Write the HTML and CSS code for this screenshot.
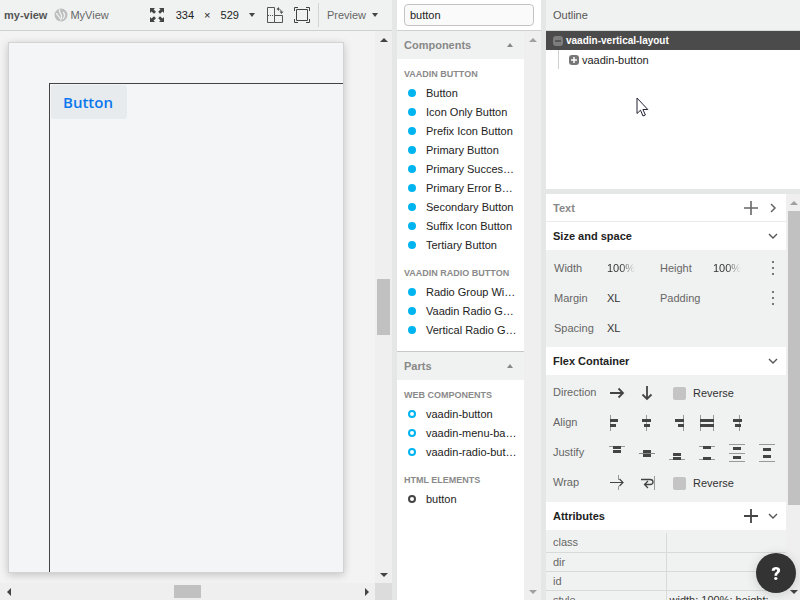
FILE: index.html
```
<!DOCTYPE html>
<html lang="en">
<head>
  <meta charset="UTF-8">
  <meta name="viewport" content="width=device-width, initial-scale=1.0">
  <title>my-view - Designer</title>
  <link rel="stylesheet" href="styles.css">
</head>
<body>
<div class="designer">

  <!-- Canvas -->
  <main class="canvas">
    <header class="toolbar">
      <span class="view-tag">my-view</span>
      <svg class="view-logo" width="14" height="14" viewBox="0 0 14 14"><circle cx="7" cy="7" r="6.5" fill="#bcbebd"/><path d="M6 1.500C4 4 7 5.500 7.500 7.500S7 11 6.500 12.500M2.500 5c0 2.500 3 3 3.500 5.500M9 4c2 2 2.500 4 0 7" fill="none" stroke="#f0f2f1" stroke-width="1.300"/></svg>
      <span class="view-class">MyView</span>
      <button class="icon-button fit" type="button" aria-label="Fit to screen">
        <svg width="14" height="14" viewBox="0 0 14 14"><path d="M0 0h5L3.600 1.400 6 3.800 4 5.700 1.500 3.400 0 5zM14 0v5l-1.500-1.600L10 5.700 8.200 3.800l2.300-2.400L9 0zM0 14V9l1.500 1.600L4 8.300l2 1.900-2.400 2.400L5 14zM14 14H9l1.500-1.400-2.300-2.400L10 8.300l2.500 2.300L14 9z" fill="#444"/></svg>
      </button>
      <button class="size" type="button"><span>334</span><span class="times">×</span><span>529</span><span class="caret-down"></span></button>
      <button class="icon-button" type="button" aria-label="Rotate">
        <svg width="17" height="17" viewBox="0 0 17 17" fill="none" stroke="#555"><path d="M.5.500h7v15h-7zM7.500 8.500h8v7h-8"/><path d="M1 8.500h6" stroke-dasharray="1 1"/><path d="M11 2c2.500 0 3.500 1.500 3.500 4"/><path d="M12 0v4L9.500 2zM12.500 4.500h4l-2 2.500z" fill="#555" stroke="none"/></svg>
      </button>
      <button class="icon-button frame" type="button" aria-label="Toggle frame">
        <svg width="17" height="17" viewBox="0 0 17 17" fill="none" stroke="#444"><path d="M2.500 2.500h11v11h-11z"/><path d="M.5 4V.500H4M12 .500h3.500V4M15.500 12v3.500H12M4 15.500H.5V12"/></svg>
      </button>
      <button class="preview" type="button">Preview<span class="caret-down"></span></button>
    </header>
    <div class="viewport">
      <div class="stage">
        <div class="page">
          <div class="vertical-layout">
            <button class="demo-button" type="button">Button</button>
          </div>
        </div>
      </div>
      <div class="scrollbar vertical dark">
        <span class="arrow up"></span>
        <div class="track center"><div class="thumb stage-y"></div></div>
        <span class="arrow down"></span>
      </div>
      <div class="scrollbar horizontal dark">
        <span class="arrow left"></span>
        <div class="track center"><div class="thumb stage-x"></div></div>
        <span class="arrow right"></span>
      </div>
      <div class="corner"></div>
    </div>
  </main>

  <!-- Palette -->
  <section class="palette">
    <div class="search">
      <input type="text" value="button" aria-label="Search components">
    </div>
    <div class="scroll-area">
      <div class="palette-list">
        <h2 class="palette-head">Components<span class="caret-up"></span></h2>
        <div class="palette-body">
          <h3>VAADIN BUTTON</h3>
          <ul>
            <li>Button</li>
            <li>Icon Only Button</li>
            <li>Prefix Icon Button</li>
            <li>Primary Button</li>
            <li>Primary Succes…</li>
            <li>Primary Error B…</li>
            <li>Secondary Button</li>
            <li>Suffix Icon Button</li>
            <li>Tertiary Button</li>
          </ul>
          <h3>VAADIN RADIO BUTTON</h3>
          <ul>
            <li>Radio Group Wi…</li>
            <li>Vaadin Radio G…</li>
            <li>Vertical Radio G…</li>
          </ul>
        </div>
        <h2 class="palette-head parts">Parts<span class="caret-up"></span></h2>
        <div class="palette-body">
          <h3>WEB COMPONENTS</h3>
          <ul class="web">
            <li>vaadin-button</li>
            <li>vaadin-menu-ba…</li>
            <li>vaadin-radio-but…</li>
          </ul>
          <h3>HTML ELEMENTS</h3>
          <ul class="html">
            <li>button</li>
          </ul>
        </div>
      </div>
      <div class="scrollbar vertical">
        <span class="arrow up"></span>
        <div class="track"></div>
        <span class="arrow down"></span>
      </div>
    </div>
  </section>

  <aside class="side">
    <!-- Outline -->
    <section class="outline">
      <h2 class="outline-head">Outline</h2>
      <ul class="tree">
        <li>
          <div class="node selected">
            <svg width="10" height="10" viewBox="0 0 10 10"><rect width="10" height="10" rx="3" fill="#7d7d7d"/><path d="M2 5h6" stroke="#4b4b4b" stroke-width="1.500"/></svg>
            vaadin-vertical-layout
          </div>
          <ul>
            <li>
              <div class="node">
                <svg width="10" height="10" viewBox="0 0 10 10"><rect width="10" height="10" rx="3" fill="#777"/><path d="M2 5h6M5 2v6" stroke="#fff" stroke-width="1.500"/></svg>
                vaadin-button
              </div>
            </li>
          </ul>
        </li>
      </ul>
    </section>

    <!-- Properties -->
    <section class="properties">
      <div class="property-list">
        <div class="panel-head text-head">
          <h2>Text</h2>
          <button class="icon-button" type="button" aria-label="Add text style"><svg width="14" height="14" viewBox="0 0 14 14"><path d="M7 0v14M0 7h14" stroke="#666" stroke-width="1.600"/></svg></button>
          <button class="icon-button chevron" type="button" aria-label="Expand text"><svg width="10" height="10" viewBox="0 0 10 10"><path d="M3 1l4 4-4 4" fill="none" stroke="#666" stroke-width="1.500"/></svg></button>
        </div>

        <div class="panel-head">
          <h2>Size and space</h2>
          <button class="icon-button chevron" type="button" aria-label="Collapse size and space"><svg width="10" height="10" viewBox="0 0 10 10"><path d="M1 3l4 4 4-4" fill="none" stroke="#555" stroke-width="1.400"/></svg></button>
        </div>
        <div class="size-grid">
          <label for="width">Width</label><input class="fade" id="width" type="text" value="100%">
          <label for="height">Height</label><input class="fade" id="height" type="text" value="100%">
          <button class="icon-button dots" type="button" aria-label="More size options"><svg width="4" height="16" viewBox="0 0 4 16"><path d="M1 1h2v2H1zM1 7h2v2H1zM1 13h2v2H1z" fill="#777"/></svg></button>
          <label for="margin">Margin</label><input id="margin" type="text" value="XL">
          <label for="padding">Padding</label><input id="padding" type="text">
          <button class="icon-button dots" type="button" aria-label="More spacing options"><svg width="4" height="16" viewBox="0 0 4 16"><path d="M1 1h2v2H1zM1 7h2v2H1zM1 13h2v2H1z" fill="#777"/></svg></button>
          <label for="spacing">Spacing</label><input id="spacing" type="text" value="XL">
        </div>

        <div class="panel-head">
          <h2>Flex Container</h2>
          <button class="icon-button chevron" type="button" aria-label="Collapse flex container"><svg width="10" height="10" viewBox="0 0 10 10"><path d="M1 3l4 4 4-4" fill="none" stroke="#555" stroke-width="1.400"/></svg></button>
        </div>
        <div class="flex-rows">
          <div class="flex-row">
            <span class="row-label">Direction</span>
            <button type="button" aria-label="Row"><svg width="18" height="18" viewBox="0 0 18 18"><path d="M2 9h13M10.500 4.500L15 9l-4.500 4.500" fill="none" stroke="#444" stroke-width="1.800"/></svg></button>
            <button type="button" aria-label="Column"><svg width="18" height="18" viewBox="0 0 18 18"><path d="M9 2v13M4.500 10.500L9 15l4.500-4.500" fill="none" stroke="#444" stroke-width="1.800"/></svg></button>
            <label class="reverse"><input type="checkbox">Reverse</label>
          </div>
          <div class="flex-row">
            <span class="row-label">Align</span>
            <button type="button" aria-label="Align start"><svg width="18" height="18" viewBox="0 0 18 18"><path d="M2.500 1v16" stroke="#999"/><path d="M2 5h8v3H2zM2 10h6v3H2z" fill="#444"/></svg></button>
            <button type="button" aria-label="Align center"><svg width="18" height="18" viewBox="0 0 18 18"><path d="M8.500 1v16" stroke="#999"/><path d="M4 5h9v3H4zM6 10h6v3H6z" fill="#444"/></svg></button>
            <button type="button" aria-label="Align end"><svg width="18" height="18" viewBox="0 0 18 18"><path d="M15.500 1v16" stroke="#999"/><path d="M7 5h9v3H7zM10 10h6v3h-6z" fill="#444"/></svg></button>
            <button type="button" aria-label="Align stretch"><svg width="18" height="18" viewBox="0 0 18 18"><path d="M2.500 1v16M15.500 1v16" stroke="#999"/><path d="M2 5h14v3H2zM2 10h14v3H2z" fill="#444"/></svg></button>
            <button type="button" aria-label="Align baseline"><svg width="18" height="18" viewBox="0 0 18 18"><path d="M11.500 1v16" stroke="#999"/><path d="M5 5h9v3H5zM7 10h6v3H7z" fill="#444"/></svg></button>
          </div>
          <div class="flex-row">
            <span class="row-label">Justify</span>
            <button type="button" aria-label="Justify start"><svg width="18" height="18" viewBox="0 0 18 18"><path d="M1 2.500h16" stroke="#999"/><path d="M5 2h8v3H5zM5 6h8v3H5z" fill="#444"/></svg></button>
            <button type="button" aria-label="Justify center"><svg width="18" height="18" viewBox="0 0 18 18"><path d="M5 6h8v7H5z" fill="#444"/><path d="M1 9.500h16" stroke="#888"/></svg></button>
            <button type="button" aria-label="Justify end"><svg width="18" height="18" viewBox="0 0 18 18"><path d="M1 15.500h16" stroke="#999"/><path d="M5 9h8v3H5zM5 13h8v3H5z" fill="#444"/></svg></button>
            <button type="button" aria-label="Space between"><svg width="18" height="18" viewBox="0 0 18 18"><path d="M1 2.500h16M1 15.500h16" stroke="#999"/><path d="M5 2h8v3H5zM5 13h8v3H5z" fill="#444"/></svg></button>
            <button type="button" aria-label="Space around"><svg width="18" height="18" viewBox="0 0 18 18"><path d="M1 .500h16M1 9.500h16M1 17.500h16" stroke="#999"/><path d="M5 3h8v3H5zM5 12h8v3H5z" fill="#444"/></svg></button>
            <button type="button" aria-label="Space evenly"><svg width="18" height="18" viewBox="0 0 18 18"><path d="M1 .500h16M1 17.500h16" stroke="#999"/><path d="M5 4h8v3H5zM5 11h8v3H5z" fill="#444"/></svg></button>
          </div>
          <div class="flex-row">
            <span class="row-label">Wrap</span>
            <button type="button" aria-label="No wrap"><svg width="18" height="18" viewBox="0 0 18 18" fill="none"><path d="M10.500 1v5M10.500 12v4" stroke="#999"/><path d="M2 8.500h13M11.500 5l3.500 3.500-3.500 3.500" stroke="#444" stroke-width="1.200"/></svg></button>
            <button type="button" aria-label="Wrap"><svg width="18" height="18" viewBox="0 0 18 18" fill="none"><path d="M16.500 2v14" stroke="#999"/><path d="M3 5.500h9c4 0 4 5 0 5H7M10 7l-3.500 3.500L10 14" stroke="#444" stroke-width="1.300"/></svg></button>
            <label class="reverse"><input type="checkbox">Reverse</label>
          </div>
        </div>

        <div class="panel-head">
          <h2>Attributes</h2>
          <button class="icon-button" type="button" aria-label="Add attribute"><svg width="14" height="14" viewBox="0 0 14 14"><path d="M7 0v14M0 7h14" stroke="#444" stroke-width="1.800"/></svg></button>
          <button class="icon-button chevron" type="button" aria-label="Collapse attributes"><svg width="10" height="10" viewBox="0 0 10 10"><path d="M1 3l4 4 4-4" fill="none" stroke="#555" stroke-width="1.400"/></svg></button>
        </div>
        <table class="attributes">
          <tr><th scope="row">class</th><td></td></tr>
          <tr><th scope="row">dir</th><td></td></tr>
          <tr><th scope="row">id</th><td></td></tr>
          <tr><th scope="row">style</th><td>width: 100%; height:</td></tr>
        </table>
      </div>
      <div class="scrollbar vertical narrow">
        <span class="arrow up"></span>
        <div class="track"><div class="thumb props-y"></div></div>
        <span class="arrow down active"></span>
      </div>
    </section>
  </aside>
</div>

<button class="help" type="button" aria-label="Help">?</button>
<svg class="cursor" width="13" height="20" viewBox="0 0 13 20"><path d="M1 1v15.500l3.500-3.300 2.500 5.800 2.400-1-2.500-5.500h4.900z" fill="#fff" stroke="#223" stroke-width="1"/></svg>
</body>
</html>
```
FILE: styles.css
```
*,
*::before {
  margin: 0;
  padding: 0;
  box-sizing: border-box;
}

body {
  font-family: "Liberation Sans", Arial, sans-serif;
  font-size: 11px;
  color: #222;
  background-color: #e5e7e6;
  overflow: hidden;
}

ul {
  list-style: none;
}

button,
input {
  font: inherit;
  color: inherit;
  border: none;
  background: none;
}

button {
  cursor: pointer;
}

h2,
h3 {
  font-size: 11px;
}

svg {
  display: block;
}

.designer {
  display: grid;
  grid-template-columns: minmax(0, 1fr) 144px 254px;
  gap: 5px;
  height: 100vh;
}

/* Toolbar */

.canvas {
  display: flex;
  flex-direction: column;
  min-height: 0;
}

.toolbar {
  display: flex;
  align-items: center;
  height: 31px;
  padding-left: 4px;
  background-color: #f0f2f1;
  border-bottom: 1px solid #cfd1d0;
  white-space: nowrap;
}

.view-tag {
  color: #555;
  font-weight: bold;
}

.view-logo {
  margin: 0 2px 0 7px;
}

.view-class {
  color: #666;
}

.fit {
  margin: 0 12px 0 41px;
}

.size {
  display: flex;
  align-items: center;
  margin-right: 12px;
}

.times {
  margin: 0 10px;
}

.caret-down,
.caret-up {
  border: 3px solid transparent;
}

.caret-down {
  border-top: 4px solid #444;
  border-bottom: none;
  margin-left: 10px;
}

.caret-up {
  border-bottom: 4px solid #888;
  border-top: none;
}

.frame {
  margin-left: 10px;
}

.preview {
  display: flex;
  align-items: center;
  height: 24px;
  margin-left: 7px;
  padding-left: 8px;
  border-left: 1px solid #d3d5d4;
  color: #666;
}

.preview .caret-down {
  margin-left: 6px;
}

/* Canvas area */

.viewport {
  flex: 1;
  display: grid;
  grid-template: minmax(0, 1fr) 17px / minmax(0, 1fr) 17px;
  min-height: 0;
}

.stage {
  display: flex;
  padding: 11px 31px 10px 8px;
  background-color: #f3f3f3;
}

.page {
  flex: 1;
  display: flex;
  padding: 40px 0 0 40px;
  background-color: #f3f5f7;
  border: 1px solid #d2d3d4;
  box-shadow: 0 2px 8px rgba(0, 0, 0, 0.2);
}

.vertical-layout {
  flex: 1;
  padding: 1px;
  border: solid #444;
  border-width: 1px 0 0 1px;
}

.demo-button {
  height: 34px;
  padding: 0 14px 0 12px;
  background-color: #e8ebee;
  border-radius: 3px;
  color: #0b77ed;
  font-family: "Open Sans", sans-serif;
  font-size: 15px;
  font-weight: 600;
  line-height: 32px;
}

/* Scrollbars */

.scrollbar {
  display: flex;
  background-color: #efefef;
}

.vertical {
  flex: 0 0 17px;
  flex-direction: column;
  padding: 0 2px;
}

.horizontal {
  padding: 2px 0;
}

.narrow {
  flex-basis: 14px;
  padding-right: 0;
}

.track {
  flex: 1;
  display: flex;
  flex-direction: inherit;
}

.track.center {
  justify-content: center;
}

.thumb {
  background-color: #c1c1c1;
}

.stage-y {
  height: 11%;
}

.stage-x {
  width: 8%;
}

.props-y {
  height: 79%;
}

.arrow {
  display: flex;
  align-items: center;
  justify-content: center;
  flex: 0 0 17px;
  color: #a0a0a0;
}

.dark .arrow,
.arrow.active {
  color: #444;
}

.arrow::before {
  content: "";
  border: 4px solid transparent;
}

.arrow.up::before {
  border-bottom-color: currentColor;
  border-top: none;
}

.arrow.down::before {
  border-top-color: currentColor;
  border-bottom: none;
}

.arrow.left::before {
  border-right-color: currentColor;
  border-left: none;
}

.arrow.right::before {
  border-left-color: currentColor;
  border-right: none;
}

.corner {
  background-color: #dcdcdc;
}

/* Palette */

.palette {
  display: flex;
  flex-direction: column;
  min-height: 0;
  background-color: #fff;
}

.search {
  height: 31px;
  padding: 4px 7px;
  border-bottom: 1px solid #cfd1d0;
}

.search input {
  width: 100%;
  height: 22px;
  padding: 0 5px;
  background-color: #fafafa;
  border: 1px solid #c4c4c4;
  border-radius: 4px;
}

.scroll-area {
  flex: 1;
  display: flex;
  min-height: 0;
}

.palette-list {
  flex: 1;
  min-width: 0;
  overflow: hidden;
}

.palette-head {
  display: flex;
  align-items: center;
  justify-content: space-between;
  height: 28px;
  padding: 0 11px 0 7px;
  background-color: #f0f2f1;
  color: #888;
}

.parts {
  height: 29px;
  border-top: 1px solid #c6c8c7;
}

.palette-body {
  padding: 5px 7px 3px;
}

.palette-body h3 {
  color: #8a8a8a;
  font-size: 9px;
  line-height: 20px;
  white-space: nowrap;
}

.palette-body ul {
  margin-bottom: 8px;
}

.palette-body li {
  padding-left: 4px;
  line-height: 19px;
  white-space: nowrap;
}

.palette-body li::before {
  content: "";
  display: inline-block;
  width: 8px;
  height: 8px;
  margin-right: 10px;
  border: 4px solid #00b4f0;
  border-radius: 50%;
}

.palette-body .web li::before,
.palette-body .html li::before {
  border-width: 2px;
}

.palette-body .html li::before {
  border-color: #444;
}

/* Outline */

.side {
  display: flex;
  flex-direction: column;
  gap: 5px;
  min-height: 0;
}

.outline {
  flex: 0 0 189px;
  background-color: #fff;
}

.outline-head {
  height: 31px;
  padding-left: 7px;
  background-color: #f0f2f1;
  border-bottom: 1px solid #d8dad9;
  color: #555;
  font-weight: normal;
  line-height: 30px;
}

.node {
  display: flex;
  align-items: center;
  gap: 3px;
  height: 19px;
  padding-left: 7px;
}

.node.selected {
  background-color: #4b4b4b;
  color: #fff;
  font-size: 10px;
  font-weight: bold;
}

.tree ul {
  margin-left: 12px;
  padding-left: 3px;
  border-left: 1px solid #d0d0d0;
}

/* Properties */

.properties {
  flex: 1;
  display: flex;
  min-height: 0;
  background-color: #f0f2f1;
}

.property-list {
  flex: 1;
  min-width: 0;
  overflow: hidden;
}

.panel-head {
  display: flex;
  align-items: center;
  height: 28px;
  padding: 0 8px 0 7px;
  background-color: #fff;
}

.panel-head h2 {
  flex: 1;
}

.text-head {
  border-bottom: 1px solid #ececec;
  color: #888;
}

.chevron {
  margin-left: 10px;
}

.size-grid {
  display: grid;
  grid-template-columns: repeat(4, 53px) 1fr;
  grid-auto-rows: 30px;
  align-items: center;
  padding: 3px 8px 4px;
  color: #666;
}

.size-grid input {
  width: 40px;
  color: #333;
}

.size-grid .fade {
  width: 28px;
  -webkit-mask-image: linear-gradient(to right, #000 50%, transparent);
  mask-image: linear-gradient(to right, #000 50%, transparent);
}

.dots {
  justify-self: end;
  margin-right: 3px;
}

.flex-rows {
  padding: 3px 4px 4px 7px;
  color: #666;
}

.flex-row {
  display: flex;
  align-items: center;
  height: 30px;
}

.row-label {
  flex: 0 0 49px;
  padding-bottom: 3px;
}

.flex-row button {
  flex: 0 0 30px;
  display: flex;
  justify-content: center;
}

.reverse {
  display: flex;
  align-items: center;
  gap: 7px;
  margin-left: 11px;
  color: #333;
}

.reverse input {
  appearance: none;
  width: 13px;
  height: 13px;
  background-color: #c4c4c4;
  border-radius: 2px;
}

.attributes {
  width: 100%;
  margin-top: 3px;
  border-collapse: collapse;
  table-layout: fixed;
  color: #333;
}

.attributes th,
.attributes td {
  height: 19px;
  border-bottom: 1px solid #d8dad9;
  white-space: nowrap;
}

.attributes th {
  padding-left: 7px;
  border-right: 1px solid #d8dad9;
  color: #666;
  font-weight: normal;
  text-align: left;
}

.attributes td {
  padding-left: 3px;
}

/* Floating help button and pointer */

.help {
  position: fixed;
  right: 4px;
  bottom: 7px;
  width: 40px;
  height: 40px;
  background-color: #333;
  border-radius: 50%;
  box-shadow: 0 2px 12px rgba(0, 0, 0, 0.15);
  color: #fff;
  font-family: Roboto, sans-serif;
  font-size: 18px;
  font-weight: 900;
}

.cursor {
  position: absolute;
  top: 97px;
  left: 636px;
  pointer-events: none;
}
```
